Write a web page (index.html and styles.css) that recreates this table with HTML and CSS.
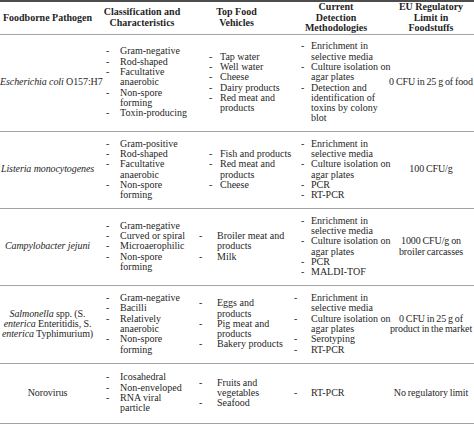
FILE: index.html
```html
<!DOCTYPE html>
<html lang="en">
<head>
<meta charset="utf-8">
<title>Foodborne pathogens</title>
<link rel="stylesheet" href="styles.css">
</head>
<body>
<table class="pathogens">
  <colgroup>
    <col class="c1"><col class="c2"><col class="c3"><col class="c4"><col class="c5">
  </colgroup>
  <thead>
    <tr class="row-head">
      <th>Foodborne Pathogen</th>
      <th>Classification and<br>Characteristics</th>
      <th>Top Food<br>Vehicles</th>
      <th>Current<br>Detection<br>Methodologies</th>
      <th>EU Regulatory<br>Limit in<br>Foodstuffs</th>
    </tr>
  </thead>
  <tbody>
    <tr class="row-1">
      <td class="name"><i>Escherichia coli</i> O157:H7</td>
      <td><ul class="dash cls"><li>Gram-negative</li><li>Rod-shaped</li><li>Facultative<br>anaerobic</li><li>Non-spore<br>forming</li><li>Toxin-producing</li></ul></td>
      <td><ul class="dash veh-a"><li>Tap water</li><li>Well water</li><li>Cheese</li><li>Dairy products</li><li>Red meat and<br>products</li></ul></td>
      <td><ul class="dash det-a"><li>Enrichment in<br>selective media</li><li>Culture isolation on<br>agar plates</li><li>Detection and<br>identification of<br>toxins by colony<br>blot</li></ul></td>
      <td class="limit">0 CFU in 25 g of food</td>
    </tr>
    <tr class="row-2">
      <td class="name"><i>Listeria monocytogenes</i></td>
      <td><ul class="dash cls"><li>Gram-positive</li><li>Rod-shaped</li><li>Facultative<br>anaerobic</li><li>Non-spore<br>forming</li></ul></td>
      <td><ul class="dash veh-a"><li>Fish and products</li><li>Red meat and<br>products</li><li>Cheese</li></ul></td>
      <td><ul class="dash det-a"><li>Enrichment in<br>selective media</li><li>Culture isolation on<br>agar plates</li><li>PCR</li><li>RT-PCR</li></ul></td>
      <td class="limit">100 CFU/g</td>
    </tr>
    <tr class="row-3">
      <td class="name"><i>Campylobacter jejuni</i></td>
      <td><ul class="dash cls"><li>Gram-negative</li><li>Curved or spiral</li><li>Microaerophilic</li><li>Non-spore<br>forming</li></ul></td>
      <td><ul class="dash veh-b"><li>Broiler meat and<br>products</li><li>Milk</li></ul></td>
      <td><ul class="dash det-a"><li>Enrichment in<br>selective media</li><li>Culture isolation on<br>agar plates</li><li>PCR</li><li>MALDI-TOF</li></ul></td>
      <td class="limit">1000 CFU/g on<br>broiler carcasses</td>
    </tr>
    <tr class="row-4">
      <td class="name"><i>Salmonella</i> spp. (S.<br><i>enterica</i> Enteritidis, S.<br><i>enterica</i> Typhimurium)</td>
      <td><ul class="dash cls"><li>Gram-negative</li><li>Bacilli</li><li>Relatively<br>anaerobic</li><li>Non-spore<br>forming</li></ul></td>
      <td><ul class="dash veh-b"><li>Eggs and<br>products</li><li>Pig meat and<br>products</li><li>Bakery products</li></ul></td>
      <td><ul class="dash det-b"><li>Enrichment in<br>selective media</li><li>Culture isolation on<br>agar plates</li><li>Serotyping</li><li>RT-PCR</li></ul></td>
      <td class="limit">0 CFU in 25 g of<br>product in the market</td>
    </tr>
    <tr class="row-5">
      <td class="name">Norovirus</td>
      <td><ul class="dash cls"><li>Icosahedral</li><li>Non-enveloped</li><li>RNA viral<br>particle</li></ul></td>
      <td><ul class="dash veh-b"><li>Fruits and<br>vegetables</li><li>Seafood</li></ul></td>
      <td><ul class="dash det-b"><li>RT-PCR</li></ul></td>
      <td class="limit">No regulatory limit</td>
    </tr>
  </tbody>
</table>
</body>
</html>
```

FILE: styles.css
```css
html, body {
  margin: 0;
  padding: 0;
  background: #ffffff;
}

.pathogens {
  border-collapse: collapse;
  table-layout: fixed;
  width: 474px;
  font-family: "Liberation Serif", "Times New Roman", serif;
  font-size: 10px;
  line-height: 10.3px;
  color: #1f1f1f;
  border-top: 2px solid #4d4d4d;
}

.c1 { width: 95px; }
.c2 { width: 94px; }
.c3 { width: 95px; }
.c4 { width: 104px; }
.c5 { width: 86px; }

.pathogens th,
.pathogens td {
  padding: 0;
  vertical-align: middle;
  text-align: center;
  border-bottom: 1px solid #a3a3a3;
}

.pathogens th {
  font-weight: bold;
  line-height: 10.5px;
}

.row-head { height: 33px; }
.row-1 { height: 97px; }
.row-2 { height: 77px; }
.row-3 { height: 77px; }
.row-4 { height: 78px; }
.row-5 { height: 60px; }

.name {
  white-space: nowrap;
  letter-spacing: -0.1px;
}

.dash {
  list-style: none;
  margin: 0;
  padding: 0;
  text-align: left;
  white-space: nowrap;
}

.dash li {
  display: grid;
  grid-template-columns: var(--dash-w) auto;
}

.dash li::before {
  content: "-";
}

.cls { padding-left: 11px; --dash-w: 14px; }
.veh-a { padding-left: 20px; --dash-w: 11px; }
.veh-b { padding-left: 10px; --dash-w: 18px; }
.det-a { padding-left: 17px; --dash-w: 10px; }
.det-b { padding-left: 10px; --dash-w: 17px; }

.limit {
  white-space: nowrap;
  word-spacing: -0.5px;
  letter-spacing: -0.1px;
}
```
